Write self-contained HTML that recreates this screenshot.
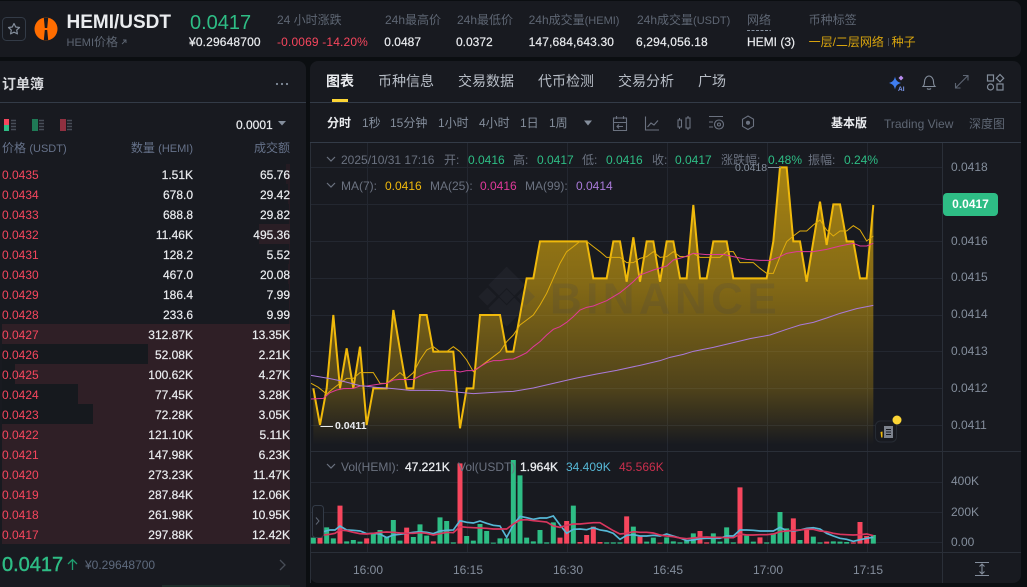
<!DOCTYPE html>
<html lang="zh-CN">
<head>
<meta charset="utf-8">
<title>HEMI/USDT</title>
<style>
html,body{margin:0;padding:0;width:1027px;height:587px;overflow:hidden;background:#0b0e11}
body{position:relative;font-family:"Liberation Sans","Noto Sans CJK SC",sans-serif;font-size:12px;color:#eaecef}
.p{position:absolute;background:#181a20}
.t{position:absolute;white-space:nowrap;line-height:16px;height:16px}
.r{text-align:right}
.m{color:#5e6673}
.w{color:#eaecef;-webkit-text-stroke:.2px #eaecef}
.g{color:#2ebd85}
.rd{color:#f6465d}
.a{color:#848e9c}
.l{color:#6b7280}
.b{position:absolute;height:20px;background:#2f1f26}
.s{font-size:11px}
.ls{letter-spacing:.15px}
svg{position:absolute;left:0;top:0}
</style>
</head>
<body>
<div class="p" style="left:0;top:1px;width:1021px;height:56px;border-radius:0 8px 8px 0"></div>
<div class="p" style="left:0;top:61px;width:306px;height:526px;border-radius:0 8px 0 0"></div>
<div class="p" style="left:310px;top:61px;width:711px;height:522px;border-radius:8px"></div>

<!-- order book bars -->
<div class="b" style="left:286px;top:164px;width:4px;background:#241b22"></div>
<div class="b" style="left:288px;top:184px;width:2px;background:#241b22"></div>
<div class="b" style="left:289px;top:204px;width:1px;background:#241b22"></div>
<div class="b" style="left:259px;top:224px;width:31px;background:#2a1e25"></div>
<div class="b" style="left:289px;top:244px;width:1px;background:#241b22"></div>
<div class="b" style="left:288px;top:264px;width:2px;background:#241b22"></div>
<div class="b" style="left:289px;top:284px;width:1px;background:#241b22"></div>
<div class="b" style="left:289px;top:304px;width:1px;background:#241b22"></div>
<div class="b" style="left:2px;top:324px;width:288px"></div>
<div class="b" style="left:2px;top:344px;width:146px;background:#16191e"></div>
<div class="b" style="left:148px;top:344px;width:142px"></div>
<div class="b" style="left:2px;top:364px;width:13px;background:#16191e"></div>
<div class="b" style="left:15px;top:364px;width:275px"></div>
<div class="b" style="left:2px;top:384px;width:76px;background:#16191e"></div>
<div class="b" style="left:78px;top:384px;width:212px"></div>
<div class="b" style="left:2px;top:404px;width:91px;background:#16191e"></div>
<div class="b" style="left:93px;top:404px;width:197px"></div>
<div class="b" style="left:2px;top:424px;width:288px;height:120px"></div>
<div style="position:absolute;left:162px;top:585px;width:128px;height:2px;background:#1e2d2a"></div>

<!-- header text -->
<div class="t" style="left:66.500px;top:14px;font-size:19px;line-height:18px;height:18px;font-weight:bold;color:#eaecef">HEMI/USDT</div>
<div class="t m" style="left:66.500px;top:34px"><span class="s">HEMI</span>价格</div>
<div class="t" style="left:190px;top:13px;font-size:20px;line-height:20px;height:20px;color:#2ebd85">0.0417</div>
<div class="t w ls" style="left:189px;top:34px">¥0.29648700</div>
<div class="t m" style="left:277px;top:12px">24 小时涨跌</div>
<div class="t rd ls" style="left:277px;top:34px">-0.0069 -14.20%</div>
<div class="t m" style="left:385px;top:12px">24h最高价</div>
<div class="t w" style="left:384.300px;top:34px">0.0487</div>
<div class="t m" style="left:457px;top:12px">24h最低价</div>
<div class="t w" style="left:456px;top:34px">0.0372</div>
<div class="t m" style="left:528.600px;top:12px">24h成交量<span class="s">(HEMI)</span></div>
<div class="t w ls" style="left:528.600px;top:34px">147,684,643.30</div>
<div class="t m" style="left:637px;top:12px">24h成交量<span class="s">(USDT)</span></div>
<div class="t w ls" style="left:636px;top:34px">6,294,056.18</div>
<div class="t m" style="left:747px;top:12px">网络</div>
<div class="t w" style="left:747px;top:34px">HEMI (3)</div>
<div class="t m" style="left:808.600px;top:12px">币种标签</div>
<div class="t" style="left:808.600px;top:34px;color:#d9a50e">一层/二层网络</div>
<div class="t" style="left:891.600px;top:34px;color:#d9a50e">种子</div>

<!-- order book text -->
<div class="t" style="left:2px;top:76px;font-size:14px;font-weight:bold;color:#d8dade">订单簿</div>
<div class="t w" style="left:236px;top:117px">0.0001</div>
<div class="t" style="left:2px;top:140px;color:#66728a">价格 <span class="s">(USDT)</span></div>
<div class="t r" style="right:834px;top:140px;color:#66728a">数量 <span class="s">(HEMI)</span></div>
<div class="t r" style="right:737px;top:140px;color:#66728a">成交额</div>

<div class="t rd" style="left:2px;top:167px">0.0435</div><div class="t r w" style="right:834px;top:167px">1.51K</div><div class="t r w" style="right:737px;top:167px">65.76</div>
<div class="t rd" style="left:2px;top:187px">0.0434</div><div class="t r w" style="right:834px;top:187px">678.0</div><div class="t r w" style="right:737px;top:187px">29.42</div>
<div class="t rd" style="left:2px;top:207px">0.0433</div><div class="t r w" style="right:834px;top:207px">688.8</div><div class="t r w" style="right:737px;top:207px">29.82</div>
<div class="t rd" style="left:2px;top:227px">0.0432</div><div class="t r w" style="right:834px;top:227px">11.46K</div><div class="t r w" style="right:737px;top:227px">495.36</div>
<div class="t rd" style="left:2px;top:247px">0.0431</div><div class="t r w" style="right:834px;top:247px">128.2</div><div class="t r w" style="right:737px;top:247px">5.52</div>
<div class="t rd" style="left:2px;top:267px">0.0430</div><div class="t r w" style="right:834px;top:267px">467.0</div><div class="t r w" style="right:737px;top:267px">20.08</div>
<div class="t rd" style="left:2px;top:287px">0.0429</div><div class="t r w" style="right:834px;top:287px">186.4</div><div class="t r w" style="right:737px;top:287px">7.99</div>
<div class="t rd" style="left:2px;top:307px">0.0428</div><div class="t r w" style="right:834px;top:307px">233.6</div><div class="t r w" style="right:737px;top:307px">9.99</div>
<div class="t rd" style="left:2px;top:327px">0.0427</div><div class="t r w" style="right:834px;top:327px">312.87K</div><div class="t r w" style="right:737px;top:327px">13.35K</div>
<div class="t rd" style="left:2px;top:347px">0.0426</div><div class="t r w" style="right:834px;top:347px">52.08K</div><div class="t r w" style="right:737px;top:347px">2.21K</div>
<div class="t rd" style="left:2px;top:367px">0.0425</div><div class="t r w" style="right:834px;top:367px">100.62K</div><div class="t r w" style="right:737px;top:367px">4.27K</div>
<div class="t rd" style="left:2px;top:387px">0.0424</div><div class="t r w" style="right:834px;top:387px">77.45K</div><div class="t r w" style="right:737px;top:387px">3.28K</div>
<div class="t rd" style="left:2px;top:407px">0.0423</div><div class="t r w" style="right:834px;top:407px">72.28K</div><div class="t r w" style="right:737px;top:407px">3.05K</div>
<div class="t rd" style="left:2px;top:427px">0.0422</div><div class="t r w" style="right:834px;top:427px">121.10K</div><div class="t r w" style="right:737px;top:427px">5.11K</div>
<div class="t rd" style="left:2px;top:447px">0.0421</div><div class="t r w" style="right:834px;top:447px">147.98K</div><div class="t r w" style="right:737px;top:447px">6.23K</div>
<div class="t rd" style="left:2px;top:467px">0.0420</div><div class="t r w" style="right:834px;top:467px">273.23K</div><div class="t r w" style="right:737px;top:467px">11.47K</div>
<div class="t rd" style="left:2px;top:487px">0.0419</div><div class="t r w" style="right:834px;top:487px">287.84K</div><div class="t r w" style="right:737px;top:487px">12.06K</div>
<div class="t rd" style="left:2px;top:507px">0.0418</div><div class="t r w" style="right:834px;top:507px">261.98K</div><div class="t r w" style="right:737px;top:507px">10.95K</div>
<div class="t rd" style="left:2px;top:527px">0.0417</div><div class="t r w" style="right:834px;top:527px">297.88K</div><div class="t r w" style="right:737px;top:527px">12.42K</div>

<div class="t" style="left:2px;top:555px;font-size:20px;line-height:20px;height:20px;color:#2ebd85;-webkit-text-stroke:.4px #2ebd85">0.0417</div>
<div class="t" style="left:85px;top:557px;color:#5e6a7d">¥0.29648700</div>

<!-- tabs -->
<div class="t" style="left:326px;top:73px;font-size:14px;font-weight:bold;color:#eaecef">图表</div>
<div class="t" style="left:378px;top:73px;font-size:14px;color:#b7bdc6">币种信息</div>
<div class="t" style="left:458px;top:73px;font-size:14px;color:#b7bdc6">交易数据</div>
<div class="t" style="left:538px;top:73px;font-size:14px;color:#b7bdc6">代币检测</div>
<div class="t" style="left:618px;top:73px;font-size:14px;color:#b7bdc6">交易分析</div>
<div class="t" style="left:698px;top:73px;font-size:14px;color:#b7bdc6">广场</div>

<div class="t" style="left:327px;top:115px;font-weight:bold;color:#eaecef">分时</div>
<div class="t a" style="left:362px;top:115px">1秒</div>
<div class="t a" style="left:390px;top:115px">15分钟</div>
<div class="t a" style="left:438px;top:115px">1小时</div>
<div class="t a" style="left:479px;top:115px">4小时</div>
<div class="t a" style="left:520px;top:115px">1日</div>
<div class="t a" style="left:549px;top:115px">1周</div>
<div class="t" style="left:831px;top:115px;font-weight:bold;color:#eaecef">基本版</div>
<div class="t" style="left:884px;top:116px;font-size:12px;color:#5e6673">Trading View</div>
<div class="t" style="left:969px;top:116px;color:#5e6673">深度图</div>

<svg width="1027" height="587" viewBox="0 0 1027 587" xmlns="http://www.w3.org/2000/svg">
<defs>
<linearGradient id="ar" gradientUnits="userSpaceOnUse" x1="0" y1="52" x2="0" y2="885">
<stop offset="0" stop-color="#f0b90b" stop-opacity=".66"/>
<stop offset=".42" stop-color="#f0b90b" stop-opacity=".5"/>
<stop offset=".8" stop-color="#f0b90b" stop-opacity=".25"/>
<stop offset="1" stop-color="#f0b90b" stop-opacity="0"/>
</linearGradient>
</defs>

<g stroke="#333b47" stroke-width="1" fill="none">
<path d="M0 102.500H306M310 102.500H1021M310 142.500H1021"/>
</g>
<g stroke="#232730" stroke-width="1" fill="none">
<path d="M311 167.500H942M311 204.500H942M311 241.500H942M311 278.500H942M311 315.500H942M311 351.500H942M311 388.500H942M311 425.500H942"/>
<path d="M367.500 143V552M467.500 143V552M567.500 143V552M667.500 143V552M767.500 143V552M867.500 143V552"/>
<path d="M311 482.500H942M311 512.500H942M311 542.500H942"/>
</g>
<g stroke="#2a2f38" stroke-width="1" fill="none">
<path d="M310.500 143V583M311 451.500H1021M311 552.500H1021M942.500 143V583"/>
</g>
<path d="M747 30.500H771" stroke="#848e9c" stroke-width="1" stroke-dasharray="3 1.500"/>
<path d="M888.500 38V46" stroke="#474d57" stroke-width="1"/>

<!-- star -->
<rect x="2.500" y="17.500" width="23" height="23" rx="4" fill="none" stroke="#333b47"/>
<path d="M14 23.500l1.700 3.500 3.800.5-2.800 2.600.7 3.800-3.400-1.800-3.400 1.800.7-3.800-2.800-2.600 3.800-.5z" fill="none" stroke="#848e9c" stroke-width="1.200" stroke-linejoin="round"/>
<!-- logo -->
<circle cx="46" cy="29" r="11.500" fill="#ff6d00"/>
<path d="M43.800 17.700h4.400l-1 10.300h-2.400zM44.800 30h2.400l1 10.300h-4.400z" fill="#181a20"/>
<path d="M122 44l4-4M123 40h3v3" stroke="#5e6673" fill="none" stroke-width=".9"/>

<!-- order book icons -->
<rect x="4" y="119" width="5" height="6" fill="#f6465d"/><rect x="4" y="125" width="5" height="6" fill="#2ebd85"/>
<path d="M11 120.500h5M11 123.500h5M11 126.500h5M11 129.500h5" stroke="#474d57" stroke-width="1.400"/>
<rect x="32" y="119" width="6" height="12" fill="#1f7a56"/>
<path d="M39 120.500h5M39 123.500h5M39 126.500h5M39 129.500h5" stroke="#474d57" stroke-width="1.400"/>
<rect x="60" y="119" width="6" height="12" fill="#8f3040"/>
<path d="M67 120.500h5M67 123.500h5M67 126.500h5M67 129.500h5" stroke="#474d57" stroke-width="1.400"/>
<path d="M278 121h8l-4 4.500z" fill="#848e9c"/>
<g fill="#848e9c"><circle cx="277" cy="84" r="1.100"/><circle cx="282" cy="84" r="1.100"/><circle cx="287" cy="84" r="1.100"/></g>
<path d="M72.500 570V559.500M68 564L72.500 559.500l4.500 4.500" stroke="#1f9e6f" stroke-width="1.300" fill="none"/>
<path d="M280 560l5 5-5 5" stroke="#474d57" stroke-width="1.300" fill="none"/>

<rect x="332" y="99" width="16" height="3" fill="#fcd535"/>

<!-- right top icons -->
<path d="M895 76.500c.8 3.800 2 5.200 6 6.500-4 1.300-5.200 2.700-6 6.500-.8-3.800-2-5.200-6-6.500 4-1.300 5.200-2.700 6-6.500z" fill="#3f7df0"/>
<path d="M901 75.500l2.500 2.500-2.500 2.500-2.500-2.500z" fill="#b98cf0"/>
<text x="898" y="91" font-size="6.500" font-weight="bold" fill="#7f9cf5" font-family="Liberation Sans,sans-serif">AI</text>
<path d="M923 86.500h12c-1.500-1.500-1.500-3-1.500-5 0-2.500-2-5.500-4.500-5.500s-4.500 3-4.500 5.500c0 2 0 3.500-1.500 5zM927 88.500c.8 1 3.200 1 4 0" fill="none" stroke="#848e9c" stroke-width="1.100"/>
<path d="M955.500 88l12-12M963 75.500h5v5M955.500 83v5h5" fill="none" stroke="#5e6673" stroke-width="1.100"/>
<g fill="none" stroke="#848e9c" stroke-width="1.200">
<rect x="987.500" y="75" width="6" height="6"/><path d="M1000 74.500l3.700 3.700-3.700 3.700-3.700-3.700z"/><circle cx="990.500" cy="87" r="3"/><rect x="997" y="84" width="6" height="6"/>
</g>

<!-- toolbar icons -->
<path d="M584 120.500h8l-4 5z" fill="#848e9c"/>
<g fill="none" stroke="#6b7280" stroke-width="1.100">
<path d="M613.500 118h13v12.500h-13zM613.500 122.500h13M616.500 116v3M623.500 116v3M623 126.500h-6M619 124.500l-2 2 2 2"/>
<path d="M645.500 116.500v13.500h13.500M647.500 127l3.500-4 3 2 4-4.500"/>
<path d="M679.500 118v2M679.500 127v2M688 116v2M688 128v2"/><rect x="678" y="120" width="3.500" height="7"/><rect x="686" y="118" width="4" height="10"/>
<path d="M709 116.500h14M709 122h4M709 127h4"/><circle cx="719" cy="124.500" r="4.500"/><circle cx="719" cy="124.500" r="1.500"/>
<path d="M748 116l5.500 3.200v7L748 129.500l-5.500-3.200v-7z"/><circle cx="748" cy="122.800" r="1.500" fill="#6b7280"/>
</g>

<g transform="translate(310 150) scale(.33333)">
<path fill="url(#ar)" d="M10 885V715L30 825 50 715 70 495 90 715 110 595 130 715 150 590 170 825 190 715 210 715 230 715 250 480 270 600 290 715 310 715 330 495 350 495 370 605 390 605 410 605 430 605 450 835 470 715 490 715 510 495 530 495 550 495 570 495 590 605 610 605 630 495 650 385 670 385 690 274 710 274 730 274 750 274 770 274 790 274 810 274 830 274 850 385 870 385 890 385 910 274 930 274 950 395 970 262 990 395 1010 274 1030 274 1050 395 1070 274 1090 274 1110 385 1130 385 1150 165 1170 385 1190 385 1210 274 1230 274 1250 274 1270 385 1290 385 1310 385 1330 385 1350 385 1370 385 1390 274 1410 52 1430 52 1450 274 1470 274 1490 395 1510 274 1530 155 1550 285 1570 163 1590 163 1610 274 1630 274 1650 385 1670 385 1690 165V885Z"/>
<g fill="#40434c" fill-opacity=".18">
<path d="M590 350l55 55-32 32-23-23-23 23-32-32z"/>
<path d="M590 530l55-55-32-32-23 23-23-23-32 32z"/>
<path d="M505 440l27-27 27 27-27 27z"/>
<path d="M621 440l27-27 27 27-27 27z"/>
<path d="M590 418l22 22-22 22-22-22z"/>
</g>
<text x="720" y="490" font-size="132" font-weight="bold" fill="#40434c" fill-opacity=".18" font-family="Liberation Sans,sans-serif" textLength="680">BINANCE</text>
<polyline fill="none" stroke="#f0b90b" stroke-width="6" stroke-linejoin="miter" points="10,715 30,825 50,715 70,495 90,715 110,595 130,715 150,590 170,825 190,715 210,715 230,715 250,480 270,600 290,715 310,715 330,495 350,495 370,605 390,605 410,605 430,605 450,835 470,715 490,715 510,495 530,495 550,495 570,495 590,605 610,605 630,495 650,385 670,385 690,274 710,274 730,274 750,274 770,274 790,274 810,274 830,274 850,385 870,385 890,385 910,274 930,274 950,395 970,262 990,395 1010,274 1030,274 1050,395 1070,274 1090,274 1110,385 1130,385 1150,165 1170,385 1190,385 1210,274 1230,274 1250,274 1270,385 1290,385 1310,385 1330,385 1350,385 1370,385 1390,274 1410,52 1430,52 1450,274 1470,274 1490,395 1510,274 1530,155 1550,285 1570,163 1590,163 1610,274 1630,274 1650,385 1670,385 1690,165"/>
<polyline fill="none" stroke="#e0ac0c" stroke-width="3" points="3,700 25,712 50,732 70,715 90,700 110,685 130,685 150,668 170,668 190,668 210,700 230,700 250,685 270,668 290,685 310,668 330,630 350,600 370,590 390,605 410,605 430,590 450,605 470,630 490,665 510,650 530,635 550,620 570,605 590,575 610,555 630,525 650,510 670,495 690,465 710,430 730,385 750,340 770,305 790,290 810,274 830,274 850,290 870,305 890,322 910,322 930,322 950,338 970,338 990,325 1010,320 1030,305 1050,322 1070,320 1090,305 1110,320 1130,320 1150,310 1170,322 1190,322 1210,322 1230,322 1250,305 1270,305 1290,338 1310,338 1330,338 1350,355 1370,370 1390,370 1410,320 1430,275 1450,258 1470,243 1490,243 1510,225 1530,210 1550,240 1570,258 1590,243 1610,243 1630,227 1650,240 1670,273 1690,258"/>
<polyline fill="none" stroke="#e0399a" stroke-width="3" points="3,747 40,745 60,728 80,720 100,716 130,715 150,708 170,708 190,705 210,702 230,700 250,690 270,688 290,689 310,688 330,678 350,670 370,665 390,662 410,661 430,661 450,666 470,662 490,662 510,650 530,638 550,632 570,632 590,628 610,627 630,618 650,608 670,590 690,575 710,555 730,538 750,530 770,517 790,500 810,480 830,472 850,468 870,460 890,452 910,440 930,428 950,412 970,395 990,375 1030,360 1070,348 1090,330 1120,322 1150,310 1190,314 1240,313 1270,320 1310,328 1350,331 1380,331 1410,320 1430,310 1460,305 1510,305 1550,298 1590,288 1630,280 1650,288 1670,288 1690,280"/>
<polyline fill="none" stroke="#a97ad9" stroke-width="3" points="3,676 60,686 100,694 150,707 200,712 250,716 300,721 350,721 400,722 450,727 490,731 550,727 610,724 670,714 730,700 800,684 860,672 920,661 990,646 1050,632 1080,622 1120,613 1150,604 1210,592 1270,578 1320,566 1380,555 1430,538 1470,525 1510,517 1550,504 1590,490 1640,476 1690,466"/>
</g>

<g transform="translate(310 450) scale(.33333)" fill="none">
<path stroke="#2ebd85" stroke-width="15" d="M10 263V281M50 232V281M70 265V281M110 274V281M130 270V281M150 275V281M190 252V281M210 240V281M230 262V281M250 210V281M270 272V281M310 261V281M330 223V281M350 257V281M390 202V281M410 213V281M430 277V281M470 258V281M490 272V281M510 222V281M530 243V281M550 278V281M570 265V281M590 265V281M610 30V281M630 76V281M650 263V281M670 274V281M690 240V281M710 277V281M730 217V281M790 167V281M890 277V281M910 277V281M930 277V281M970 230V281M1010 275V281M1030 263V281M1070 262V281M1090 274V281M1110 277V281M1130 272V281M1150 250V281M1210 250V281M1230 275V281M1250 232V281M1270 277V281M1310 257V281M1330 275V281M1370 277V281M1390 250V281M1410 186V281M1430 235V281M1470 270V281M1510 260V281M1530 277V281M1570 274V281M1590 275V281M1610 276V281M1690 255V281"/>
<path stroke="#f6465d" stroke-width="15" d="M30 258V281M90 167V281M170 265V281M290 233V281M370 274V281M450 40V281M750 263V281M770 213V281M810 276V281M830 255V281M850 230V281M870 276V281M950 199V281M990 260V281M1050 278V281M1170 243V281M1190 277V281M1290 112V281M1350 262V281M1450 205V281M1490 240V281M1550 275V281M1630 277V281M1650 216V281M1670 258V281"/>
<polyline stroke="#56b8d6" stroke-width="5" points="40,245 60,240 75,240 90,228 110,240 130,241 150,243 170,251 190,250 210,252 230,263 250,255 270,253 290,250 310,247 330,245 350,247 370,251 390,243 410,241 430,240 450,212 470,217 490,219 510,213 530,220 550,226 570,228 590,262 610,225 630,199 650,203 670,208 690,204 710,204 730,198 750,225 770,250 790,238 810,237 830,239 850,233 870,240 890,243 910,250 930,268 950,256 970,254 990,258 1010,258 1030,256 1050,258 1070,252 1090,258 1110,264 1130,272 1150,270 1170,266 1190,265 1210,265 1230,265 1250,258 1270,258 1290,240 1310,240 1330,241 1350,243 1370,243 1390,243 1410,232 1430,242 1450,243 1470,240 1490,235 1510,233 1530,237 1550,250 1570,258 1590,265 1610,268 1630,274 1650,269 1670,265 1690,262"/>
<polyline stroke="#d9365e" stroke-width="5" points="40,255 60,253 75,250 90,240 110,242 130,247 150,251 170,252 190,250 210,247 230,246 250,247 270,249 290,250 310,250 330,248 350,250 370,255 390,251 410,247 430,248 450,230 470,232 490,233 510,234 530,235 550,237 570,237 590,237 610,222 630,210 650,209 670,212 690,214 710,216 730,228 750,232 770,226 790,222 810,222 830,220 850,218 870,218 890,230 910,242 930,252 950,250 970,245 990,247 1010,247 1030,249 1050,255 1070,258 1090,260 1110,264 1130,266 1150,264 1170,262 1190,261 1210,262 1230,262 1250,263 1270,263 1290,252 1310,255 1330,255 1350,254 1370,254 1390,252 1410,245 1430,243 1450,241 1470,240 1490,238 1510,238 1530,243 1550,245 1570,250 1590,253 1610,254 1630,255 1650,254 1670,252 1690,257"/>
</g>

<g fill="none" stroke="#6b7280" stroke-width="1.200">
<path d="M327 157l4 4 4-4M327 183l4 4 4-4M327 464l4 4 4-4"/>
</g>
<path d="M320.500 426.500H333" stroke="#eaecef" stroke-width="1"/>
<path d="M768 167.500H781" stroke="#848e9c" stroke-width="1"/>
<rect x="312.500" y="505.500" width="11" height="32" rx="3" fill="#181a20" stroke="#333b47"/>
<path d="M316 517.500l3 3.500-3 3.500" fill="none" stroke="#5e6673" stroke-width="1"/>
<rect x="875.500" y="421" width="21" height="21" rx="5" fill="#181a20" stroke="#262b33"/>
<rect x="884" y="426" width="9" height="12" fill="#7d838e"/>
<path d="M886 429.500h5M886 432h5M886 434.500h5" stroke="#181a20" stroke-width="1"/>
<path d="M880.500 432l2-.5v6h-1.300z" fill="#f0b90b"/>
<circle cx="897" cy="420" r="4.500" fill="#fcd535"/>
<path d="M975 562.500H989M975 575.500H989M982 564v10M979.500 566.500L982 564l2.500 2.500M979.500 571.500L982 574l2.500-2.500" fill="none" stroke="#848e9c" stroke-width="1.100"/>
</svg>

<!-- chart legend -->
<div class="t l" style="left:341px;top:152px">2025/10/31 17:16</div>
<div class="t l" style="left:444px;top:152px">开:</div><div class="t g" style="left:468px;top:152px">0.0416</div>
<div class="t l" style="left:513px;top:152px">高:</div><div class="t g" style="left:537px;top:152px">0.0417</div>
<div class="t l" style="left:582px;top:152px">低:</div><div class="t g" style="left:606px;top:152px">0.0416</div>
<div class="t l" style="left:652px;top:152px">收:</div><div class="t g" style="left:675px;top:152px">0.0417</div>
<div class="t l" style="left:721px;top:152px">涨跌幅:</div><div class="t g" style="left:768px;top:152px">0.48%</div>
<div class="t l" style="left:808px;top:152px">振幅:</div><div class="t g" style="left:844px;top:152px">0.24%</div>

<div class="t l" style="left:341px;top:178px">MA(7):</div><div class="t" style="left:385px;top:178px;color:#f0b90b">0.0416</div>
<div class="t l" style="left:430px;top:178px">MA(25):</div><div class="t" style="left:480px;top:178px;color:#e0399a">0.0416</div>
<div class="t l" style="left:525px;top:178px">MA(99):</div><div class="t" style="left:576px;top:178px;color:#a97ad9">0.0414</div>

<div class="t" style="left:735px;top:160px;font-size:10.500px;color:#848e9c">0.0418</div>
<div class="t" style="left:335px;top:418px;font-size:10.500px;font-weight:bold;color:#eaecef">0.0411</div>

<div class="t l" style="left:341px;top:459px">Vol(HEMI):</div><div class="t w" style="left:405px;top:459px;-webkit-text-stroke:.3px #eaecef">47.221K</div>
<div class="t l" style="left:458px;top:459px">Vol(USDT)</div><div class="t w" style="left:520px;top:459px;-webkit-text-stroke:.3px #eaecef">1.964K</div>
<div class="t" style="left:566px;top:459px;color:#56b8d6">34.409K</div>
<div class="t" style="left:619px;top:459px;color:#c92f4d">45.566K</div>

<!-- axes -->
<div class="t a" style="left:951px;top:159px">0.0418</div>
<div class="t a" style="left:951px;top:233px">0.0416</div>
<div class="t a" style="left:951px;top:269px">0.0415</div>
<div class="t a" style="left:951px;top:306px">0.0414</div>
<div class="t a" style="left:951px;top:343px">0.0413</div>
<div class="t a" style="left:951px;top:380px">0.0412</div>
<div class="t a" style="left:951px;top:417px">0.0411</div>
<div style="position:absolute;left:943px;top:193px;width:55px;height:23px;line-height:23px;text-align:center;background:#2ebd85;border-radius:4px;color:#fff;font-weight:bold;font-size:12px">0.0417</div>
<div class="t a" style="left:951px;top:473px">400K</div>
<div class="t a" style="left:951px;top:504px">200K</div>
<div class="t a" style="left:951px;top:534px">0.00</div>
<div class="t a" style="left:353px;top:562px">16:00</div>
<div class="t a" style="left:453px;top:562px">16:15</div>
<div class="t a" style="left:553px;top:562px">16:30</div>
<div class="t a" style="left:653px;top:562px">16:45</div>
<div class="t a" style="left:753px;top:562px">17:00</div>
<div class="t a" style="left:853px;top:562px">17:15</div>
</body>
</html>
